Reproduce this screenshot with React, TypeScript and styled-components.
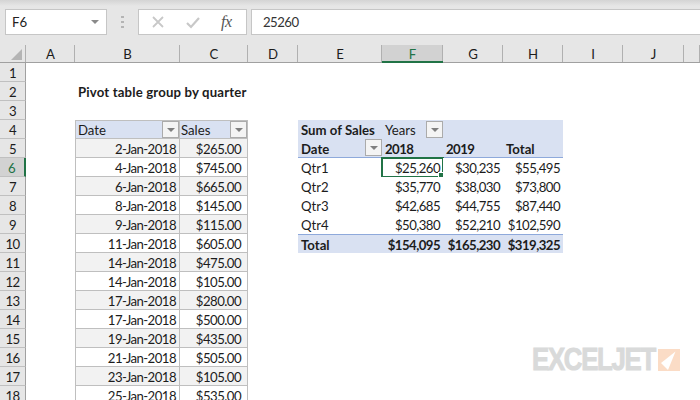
import React from "react";
import styled, { createGlobalStyle } from "styled-components";

const NUM_SPACING = "-0.55px";

const Global = createGlobalStyle`
  html, body { margin: 0; padding: 0; width: 700px; height: 400px; overflow: hidden; background: #fff; }
  #root { width: 700px; height: 400px; overflow: hidden; }
  * { box-sizing: border-box; }
`;

const Page = styled.div`
  position: relative;
  width: 700px;
  height: 400px;
  overflow: hidden;
  font-family: Lato, "Open Sans", sans-serif;
  font-size: 13.2px;
  color: #1c1c1c;
`;

const Toolbar = styled.div`
  height: 45px;
  display: flex;
  align-items: flex-start;
  padding: 9px 0 0 5px;
  background: linear-gradient(#d4d4d4 0, #e6e6e6 6px);
`;

const Box = styled.div<{ $w?: number; $grow?: boolean; $gap?: number }>`
  height: 26px;
  background: #fff;
  border: 1px solid #c6c6c6;
  display: flex;
  align-items: center;
  ${(p) => (p.$w ? `width: ${p.$w}px; flex: none;` : "")}
  ${(p) => (p.$grow ? "flex: 1; border-right: none;" : "")}
  margin-left: ${(p) => p.$gap ?? 0}px;
`;

const NameText = styled.span`
  flex: 1;
  padding-left: 6px;
  color: #222;
`;

const NameCaret = styled.span`
  width: 0;
  height: 0;
  margin-right: 7px;
  border-left: 4px solid transparent;
  border-right: 4px solid transparent;
  border-top: 4px solid #8a8a8a;
`;

const Grip = styled.div`
  width: 3px;
  height: 12px;
  margin: 7px 0 0 14px;
  flex: none;
  background: repeating-linear-gradient(#b4b4b4 0 2px, transparent 2px 5px);
`;

const FxButtons = styled(Box)`
  padding-left: 12px;
`;

const CancelIcon = styled.svg`
  width: 14px;
  height: 14px;
  flex: none;
  margin-right: 21px;
`;

const ConfirmIcon = styled(CancelIcon)`
  margin-right: 21px;
`;

const Fx = styled.span`
  font-family: "Liberation Serif", serif;
  font-style: italic;
  font-size: 16px;
  color: #555;
  letter-spacing: -0.5px;
`;

const Formula = styled.span`
  padding-left: 11px;
  color: #333;
  letter-spacing: ${NUM_SPACING};
`;

const Sheet = styled.div`
  display: grid;
  grid-template-columns: 26px 49px 105px 68px 50px 84px 61px 60px 60px 60px 61px 16px;
  grid-template-rows: 18px repeat(18, 19px);
`;

const ColHead = styled.div<{ $on?: boolean }>`
  background: ${(p) => (p.$on ? "#d2d2d2" : "#e6e6e6")};
  border-bottom: ${(p) => (p.$on ? "2px solid #217346" : "1px solid #a0a0a0")};
  box-shadow: inset -1px 0 0 #b0b0b0;
  text-align: center;
  line-height: 19px;
  color: ${(p) => (p.$on ? "#217346" : "#1c1c1c")};
`;

const CornerCell = styled.div`
  background: #e6e6e6;
  border-bottom: 1px solid #a0a0a0;
  box-shadow: inset -1px 0 0 #b0b0b0;
  padding: 4px 0 0 11px;
`;

const CornerMark = styled.div`
  width: 0;
  height: 0;
  border-left: 11px solid transparent;
  border-bottom: 11px solid #b4b4b4;
`;

const RowHead = styled.div<{ $on?: boolean }>`
  background: ${(p) => (p.$on ? "#d2d2d2" : "#e6e6e6")};
  border-bottom: 1px solid #c0c0c0;
  border-right: ${(p) => (p.$on ? "2px solid #217346" : "1px solid #a0a0a0")};
  text-align: center;
  line-height: 20px;
  letter-spacing: ${NUM_SPACING};
  padding-right: ${(p) => (p.$on ? 1 : 0)}px;
  color: ${(p) => (p.$on ? "#217346" : "#1c1c1c")};
`;

const Blank = styled.div``;

const Title = styled.div`
  padding-left: 3px;
  font-weight: 700;
  line-height: 21px;
  letter-spacing: 0.15px;
  white-space: nowrap;
`;

const TableHead = styled.div<{ $first?: boolean }>`
  position: relative;
  background: #d9e1f2;
  border: 1px solid #bfbfbf;
  border-left-width: ${(p) => (p.$first ? 1 : 0)}px;
  padding-left: ${(p) => (p.$first ? 2 : 1)}px;
  line-height: 19px;
`;

const TableCell = styled.div<{ $stripe: boolean; $pad: number; $first?: boolean }>`
  background: ${(p) => (p.$stripe ? "#f2f2f2" : "#fff")};
  border-right: 1px solid #bfbfbf;
  border-bottom: 1px solid #bfbfbf;
  ${(p) => (p.$first ? "border-left: 1px solid #bfbfbf;" : "")}
  text-align: right;
  padding-right: ${(p) => p.$pad}px;
  line-height: 20px;
  letter-spacing: ${NUM_SPACING};
  white-space: nowrap;
`;

const PivotCell = styled.div<{
  $fill?: boolean;
  $bold?: boolean;
  $right?: boolean;
  $num?: boolean;
  $line?: "top" | "bottom";
}>`
  position: relative;
  background: ${(p) => (p.$fill ? "#d9e1f2" : "#fff")};
  font-weight: ${(p) => (p.$bold ? 700 : 400)};
  text-align: ${(p) => (p.$right ? "right" : "left")};
  padding: 0 3px;
  line-height: 21px;
  white-space: nowrap;
  ${(p) => (p.$num ? `letter-spacing: ${NUM_SPACING};` : "")}
  ${(p) => (p.$line === "bottom" ? "border-bottom: 1px solid #8ea9db; line-height: 21px;" : "")}
  ${(p) => (p.$line === "top" ? "border-top: 1px solid #8ea9db; line-height: 20px;" : "")}
`;

const FilterButton = styled.span<{ $top?: number }>`
  position: absolute;
  right: 0;
  top: ${(p) => p.$top ?? 1}px;
  width: 17px;
  height: 17px;
  background: #f4f4f4;
  border: 1px solid #ababab;
  display: flex;
  align-items: center;
  justify-content: center;
  &::after {
    content: "";
    width: 0;
    height: 0;
    border-left: 4px solid transparent;
    border-right: 4px solid transparent;
    border-top: 4px solid #7f7f7f;
  }
`;

const Selection = styled.span`
  position: absolute;
  left: -1px;
  top: -1px;
  right: -1px;
  bottom: -1px;
  border: 2px solid #217346;
  pointer-events: none;
  &::after {
    content: "";
    position: absolute;
    right: -3px;
    bottom: -3px;
    width: 6px;
    height: 6px;
    background: #217346;
    border: 1px solid #fff;
    border-width: 1px 0 0 1px;
  }
`;

const Logo = styled.div`
  position: absolute;
  left: 532px;
  top: 343px;
  display: flex;
  align-items: flex-start;
  gap: 3px;
`;

const LogoWord = styled.span`
  display: block;
  width: 123px;
  font-family: "Liberation Sans", sans-serif;
  font-weight: 700;
  font-size: 31px;
  line-height: 34px;
  letter-spacing: -1.5px;
  color: #d9dada;
  -webkit-text-stroke: 1px #d9dada;
  white-space: nowrap;
  transform: scaleX(0.83);
  transform-origin: left center;
`;

const LogoMark = styled.svg`
  width: 22px;
  height: 22px;
  margin-top: 6px;
  flex: none;
`;

const cols = ["A", "B", "C", "D", "E", "F", "G", "H", "I", "J", ""];

const sales: [string, string][] = [
  ["2-Jan-2018", "$265.00"],
  ["4-Jan-2018", "$745.00"],
  ["6-Jan-2018", "$665.00"],
  ["8-Jan-2018", "$145.00"],
  ["9-Jan-2018", "$115.00"],
  ["11-Jan-2018", "$605.00"],
  ["14-Jan-2018", "$475.00"],
  ["14-Jan-2018", "$105.00"],
  ["17-Jan-2018", "$280.00"],
  ["17-Jan-2018", "$500.00"],
  ["19-Jan-2018", "$435.00"],
  ["21-Jan-2018", "$505.00"],
  ["23-Jan-2018", "$105.00"],
  ["25-Jan-2018", "$535.00"],
];

const pivot: Record<number, string[]> = {
  6: ["Qtr1", "$25,260", "$30,235", "$55,495"],
  7: ["Qtr2", "$35,770", "$38,030", "$73,800"],
  8: ["Qtr3", "$42,685", "$44,755", "$87,440"],
  9: ["Qtr4", "$50,380", "$52,210", "$102,590"],
  10: ["Total", "$154,095", "$165,230", "$319,325"],
};

function pivotCell(col: number, row: number, key: string) {
  const i = col - 4; // E=0
  if (row === 4) {
    const text = ["Sum of Sales", "Years", "", ""][i];
    return (
      <PivotCell key={key} $fill $bold={i === 0}>
        {text}
        {i === 1 && <FilterButton />}
      </PivotCell>
    );
  }
  if (row === 5) {
    const text = ["Date", "2018", "2019", "Total"][i];
    return (
      <PivotCell key={key} $fill $bold $line="bottom" $num={i === 1 || i === 2}>
        {text}
        {i === 0 && <FilterButton $top={0} />}
      </PivotCell>
    );
  }
  const total = row === 10;
  return (
    <PivotCell
      key={key}
      $fill={total}
      $bold={total}
      $right={i > 0}
      $num={i > 0}
      $line={total ? "top" : undefined}
    >
      {pivot[row][i]}
      {row === 6 && i === 1 && <Selection />}
    </PivotCell>
  );
}

function bodyCell(col: number, row: number) {
  const key = `${col}-${row}`;
  if (row === 2 && col === 1) return <Title key={key}>Pivot table group by quarter</Title>;
  if ((col === 1 || col === 2) && row === 4) {
    return (
      <TableHead key={key} $first={col === 1}>
        {col === 1 ? "Date" : "Sales"}
        <FilterButton $top={0} />
      </TableHead>
    );
  }
  if ((col === 1 || col === 2) && row >= 5) {
    const [d, s] = sales[row - 5];
    return (
      <TableCell key={key} $stripe={row % 2 === 1} $pad={col === 1 ? 3 : 6} $first={col === 1}>
        {col === 1 ? d : s}
      </TableCell>
    );
  }
  if (col >= 4 && col <= 7 && row >= 4 && row <= 10) return pivotCell(col, row, key);
  return <Blank key={key} />;
}

export default function App() {
  const rows = Array.from({ length: 18 }, (_, i) => i + 1);
  return (
    <Page>
      <Global />
      <Toolbar>
        <Box $w={102}>
          <NameText>F6</NameText>
          <NameCaret />
        </Box>
        <Grip />
        <FxButtons $w={109} $gap={14}>
          <CancelIcon viewBox="0 0 14 14">
            <path d="M2 2 L12 12 M12 2 L2 12" stroke="#c8c8c8" strokeWidth="1.8" fill="none" />
          </CancelIcon>
          <ConfirmIcon viewBox="0 0 14 14">
            <path d="M1 8 L5 12 L13 3" stroke="#c8c8c8" strokeWidth="2.2" fill="none" />
          </ConfirmIcon>
          <Fx>fx</Fx>
        </FxButtons>
        <Box $grow $gap={4}>
          <Formula>25260</Formula>
        </Box>
      </Toolbar>
      <Sheet>
        <CornerCell>
          <CornerMark />
        </CornerCell>
        {cols.map((c, i) => (
          <ColHead key={i} $on={c === "F"}>
            {c}
          </ColHead>
        ))}
        {rows.map((r) => (
          <React.Fragment key={r}>
            <RowHead $on={r === 6}>{r}</RowHead>
            {cols.map((_, c) => bodyCell(c, r))}
          </React.Fragment>
        ))}
      </Sheet>
      <Logo>
        <LogoWord>EXCELJET</LogoWord>
        <LogoMark viewBox="0 0 22 22">
          <rect width="22" height="22" fill="#fbdcc6" />
          <path d="M17.5 2.5 L3 14 L10 21 Z" fill="#fff" />
        </LogoMark>
      </Logo>
    </Page>
  );
}
